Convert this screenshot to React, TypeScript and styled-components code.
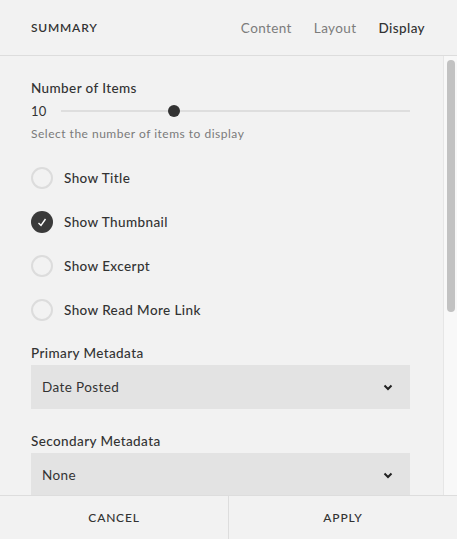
import React, { useState } from 'react';
import styled, { createGlobalStyle } from 'styled-components';

const GlobalStyle = createGlobalStyle`
  html, body {
    margin: 0;
    padding: 0;
    background: #f2f2f2;
  }
  body {
    font-family: Lato, "Open Sans", sans-serif;
    color: #333;
  }
`;

const options = [
    { id: 'title', label: 'Show Title', checked: false },
    { id: 'thumb', label: 'Show Thumbnail', checked: true },
    { id: 'excerpt', label: 'Show Excerpt', checked: false },
    { id: 'readmore', label: 'Show Read More Link', checked: false },
];

const Chevron = () => (
    <svg width="10" height="7" viewBox="0 0 10 7">
        <path d="M1.5 1.5 L5 5 L8.5 1.5" fill="none" stroke="#222" strokeWidth="2" />
    </svg>
);

const Check = () => (
    <svg width="10" height="9" viewBox="0 0 10 9">
        <path d="M1.5 5 L4 7.5 L8.5 1" fill="none" stroke="#fff" strokeWidth="1.4" />
    </svg>
);

export default function App() {
    const [checks, setChecks] = useState(options.map(o => o.checked));
    const [tab] = useState('Display');

    return (
        <>
            <GlobalStyle />
            <Panel>
                <Header>
                    <Title>SUMMARY</Title>
                    <Tabs>
                        {['Content', 'Layout', 'Display'].map(t => (
                            <Tab key={t} $active={t === tab}>{t}</Tab>
                        ))}
                    </Tabs>
                </Header>

                <Body>
                    <Scroll>
                        <Field>
                            <Label>Number of Items</Label>
                            <SliderRow>
                                <Value>10</Value>
                                <Track>
                                    <Thumb style={{ left: `${(10 / 31) * 100}%` }} />
                                </Track>
                            </SliderRow>
                            <Help>Select the number of items to display</Help>
                        </Field>

                        <CheckList>
                            {options.map((o, i) => (
                                <CheckRow
                                    key={o.id}
                                    onClick={() => setChecks(c => c.map((v, j) => (j === i ? !v : v)))}
                                >
                                    <Circle $checked={checks[i]}>{checks[i] && <Check />}</Circle>
                                    <CheckLabel>{o.label}</CheckLabel>
                                </CheckRow>
                            ))}
                        </CheckList>

                        <SelectField>
                            <Label>Primary Metadata</Label>
                            <Select>
                                <span>Date Posted</span>
                                <Chevron />
                            </Select>
                        </SelectField>

                        <SelectField>
                            <Label>Secondary Metadata</Label>
                            <Select>
                                <span>None</span>
                                <Chevron />
                            </Select>
                        </SelectField>
                    </Scroll>
                    <ScrollBar>
                        <ScrollThumb />
                    </ScrollBar>
                </Body>

                <Footer>
                    <FooterButton>CANCEL</FooterButton>
                    <FooterButton>APPLY</FooterButton>
                </Footer>
            </Panel>
        </>
    );
}

const Panel = styled.div`
  width: 457px;
  height: 539px;
  display: flex;
  flex-direction: column;
  background: #f2f2f2;
  overflow: hidden;
`;

const Header = styled.div`
  height: 55px;
  flex: none;
  display: flex;
  align-items: center;
  justify-content: space-between;
  padding: 0 32px 0 31px;
  border-bottom: 1px solid #dddddd;
`;

const Title = styled.div`
  font-size: 12px;
  font-weight: 600;
  letter-spacing: 0.8px;
  color: #333;
`;

const Tabs = styled.div`
  display: flex;
  gap: 22px;
`;

const Tab = styled.div<{ $active?: boolean }>`
  font-size: 13.5px;
  letter-spacing: 0.4px;
  color: ${p => (p.$active ? '#333' : '#7c7c7c')};
  font-weight: ${p => (p.$active ? 500 : 400)};
`;

const Body = styled.div`
  flex: 1;
  display: flex;
  overflow: hidden;
`;

const Scroll = styled.div`
  flex: 1;
  padding: 24px 33px 0 31px;
  overflow: hidden;
`;

const ScrollBar = styled.div`
  box-sizing: border-box;
  width: 14px;
  flex: none;
  background: #f8f8f8;
  border-left: 1px solid #e6e6e6;
  padding: 4px 2px 0 3px;
`;

const ScrollThumb = styled.div`
  height: 252px;
  border-radius: 4px;
  background: #c2c2c2;
`;

const Field = styled.div`
  display: flex;
  flex-direction: column;
`;

const Label = styled.div`
  font-size: 13.5px;
  font-weight: 500;
  letter-spacing: 0.4px;
  color: #333;
  line-height: 17px;
`;

const SliderRow = styled.div`
  display: flex;
  align-items: center;
  height: 28px;
`;

const Value = styled.div`
  width: 30px;
  font-size: 13px;
  letter-spacing: 0.3px;
  color: #333;
`;

const Track = styled.div`
  position: relative;
  flex: 1;
  height: 2px;
  background: #dedede;
`;

const Thumb = styled.div`
  position: absolute;
  top: 50%;
  width: 12px;
  height: 12px;
  margin: -6px 0 0 -6px;
  border-radius: 50%;
  background: #333;
`;

const Help = styled.div`
  font-size: 12px;
  letter-spacing: 0.5px;
  color: #7a7a7a;
  line-height: 17px;
`;

const CheckList = styled.div`
  display: flex;
  flex-direction: column;
  gap: 22px;
  margin-top: 25px;
`;

const CheckRow = styled.div`
  display: flex;
  align-items: center;
  gap: 11px;
  cursor: pointer;
`;

const Circle = styled.div<{ $checked?: boolean }>`
  width: 22px;
  height: 22px;
  box-sizing: border-box;
  border-radius: 50%;
  display: flex;
  align-items: center;
  justify-content: center;
  background: ${p => (p.$checked ? '#3a3a3a' : 'transparent')};
  border: ${p => (p.$checked ? 'none' : '2px solid #dcdcdc')};
`;

const CheckLabel = styled.div`
  font-size: 13.5px;
  font-weight: 500;
  letter-spacing: 0.4px;
  color: #333;
`;

const SelectField = styled.div`
  display: flex;
  flex-direction: column;
  gap: 3px;
  margin-top: 24px;
  &:first-of-type {
    margin-top: 27px;
  }
`;

const Select = styled.div`
  height: 44px;
  display: flex;
  align-items: center;
  justify-content: space-between;
  padding: 0 17px 0 11px;
  background: #e3e3e3;
  font-size: 13.5px;
  letter-spacing: 0.4px;
  color: #333;
`;

const Footer = styled.div`
  height: 43px;
  flex: none;
  display: grid;
  grid-template-columns: 228px 1fr;
  border-top: 1px solid #dddddd;
`;

const FooterButton = styled.div`
  display: flex;
  align-items: center;
  justify-content: center;
  font-size: 12px;
  font-weight: 500;
  letter-spacing: 0.8px;
  color: #333;
  & + & {
    border-left: 1px solid #dddddd;
  }
`;
